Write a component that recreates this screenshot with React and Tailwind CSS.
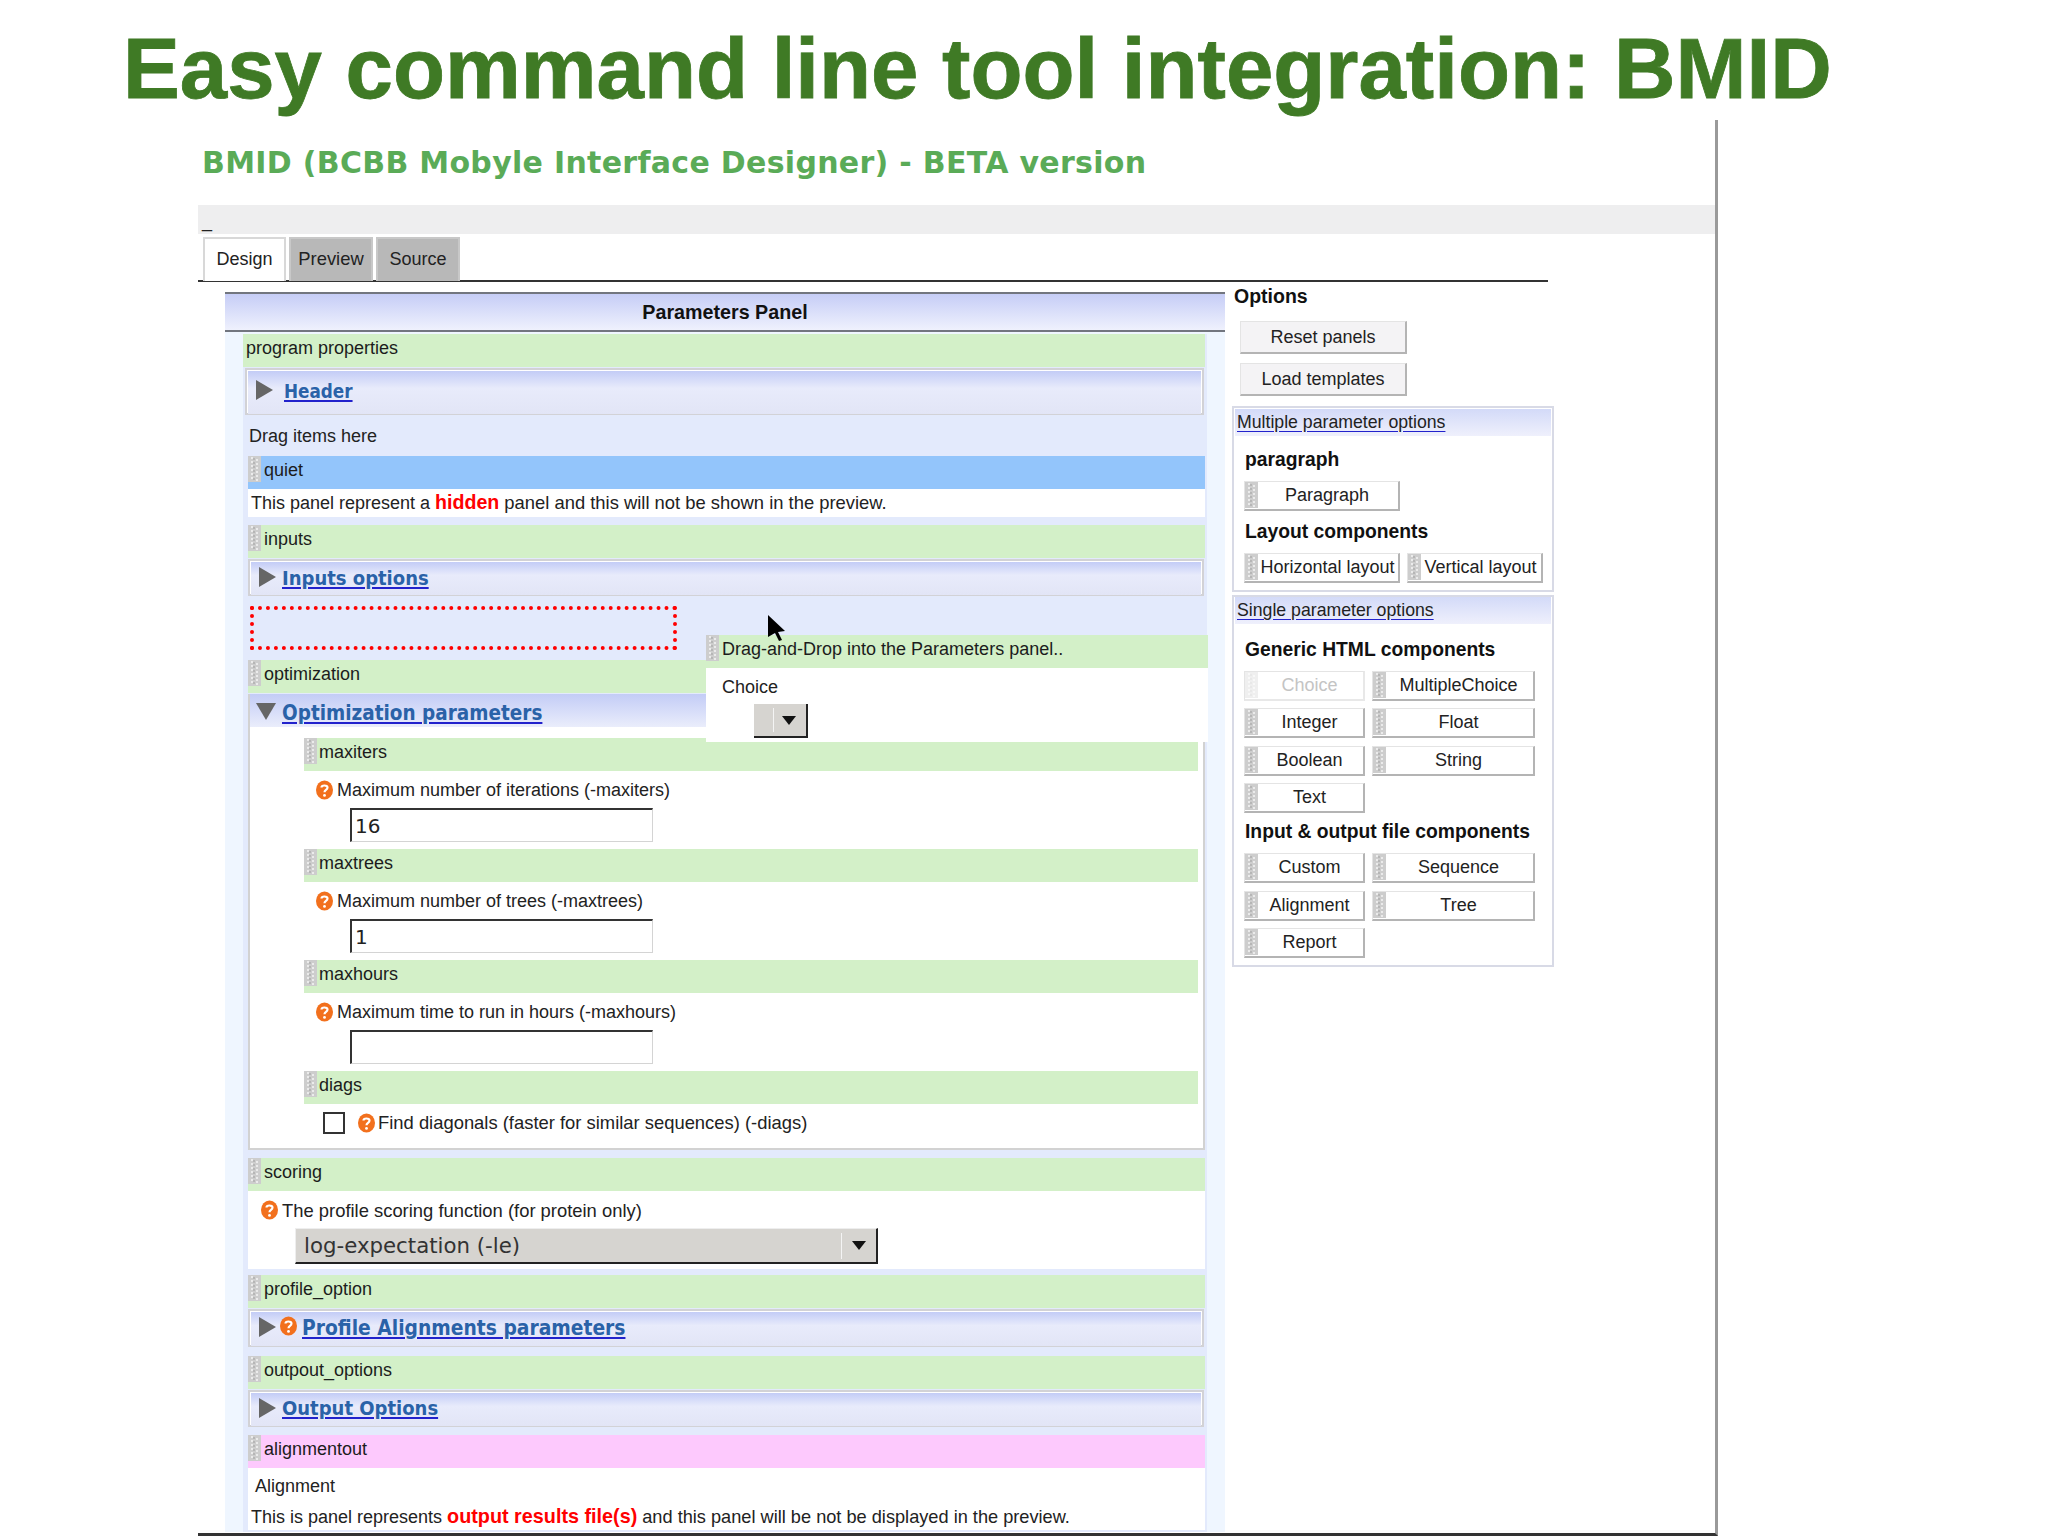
const btn = "flex bg-white h-[30px] border-t border-l border-t-[#e4e4e4] border-l-[#e4e4e4] border-r-2 border-b-2 border-r-[#b4b4b4] border-b-[#b4b4b4]";

function Grip({ faded }) {
  const dots = [2, 6, 10, 14, 18, 22];
  return (
    <svg width="13" height="26" className="shrink-0 block" opacity={faded ? 0.3 : 1}>
      <rect width="13" height="26" fill="#cdcdcd" />
      {dots.map((y) => (
        <g key={y}>
          <circle cx="4" cy={y} r="1" fill="#f4f4f4" />
          <circle cx="9" cy={y + 2} r="1" fill="#f4f4f4" />
          <circle cx="6" cy={y + 1} r="0.7" fill="#8f8f8f" />
        </g>
      ))}
    </svg>
  );
}

function Help() {
  return (
    <svg width="17" height="20" viewBox="0 0 17 20" className="shrink-0 block">
      <ellipse cx="8.5" cy="10" rx="8.5" ry="9.5" fill="#f2701d" />
      <path d="M5.5 7.5C5.5 5 11.5 4.6 11.5 7.6C11.5 10 8.5 9.8 8.5 12.2" fill="none" stroke="#fff" strokeWidth="2.2" />
      <circle cx="8.5" cy="15.4" r="1.4" fill="#fff" />
    </svg>
  );
}

function Arrow({ down }) {
  if (down) {
    return (
      <svg width="20" height="17" className="shrink-0 block">
        <polygon points="0,0 20,0 10,17" fill="#666" />
      </svg>
    );
  }
  return (
    <svg width="17" height="20" className="shrink-0 block">
      <polygon points="0,0 17,10 0,20" fill="#666" />
    </svg>
  );
}

function Bar({ label, color = "bg-[#d3f0c8]", className = "", gap = "gap-[3px]" }) {
  return (
    <div className={`flex h-[33px] ${gap} text-[18px] leading-[20px] text-[#1c1c1c] ${color} ${className}`}>
      <Grip />
      <span className="pt-[4px]">{label}</span>
    </div>
  );
}

function Title({ children, size = "text-[20.5px]" }) {
  return (
    <a className={`font-['DejaVu_Sans_Condensed','DejaVu_Sans',sans-serif] font-bold ${size} leading-[26px] text-[#2a62a8] underline decoration-[#2222cc] decoration-2 underline-offset-[2px] whitespace-nowrap`}>
      {children}
    </a>
  );
}

function Fold({ title, help, h, gap, top, arrow, size }) {
  return (
    <div className={`${h} border-2 border-[#d2d2d6] bg-white mr-[1px]`}>
      <div className={`h-full m-[1px] -mb-[1px] bg-gradient-to-b from-[#c3ccf6] via-[#e8ebfb] via-40% to-[#e2e5f6] flex items-start pl-[8px] ${top} ${gap}`}>
        <div className={arrow}>
          <Arrow />
        </div>
        {help && (
          <div className="pt-[1px] -ml-[7px] -mr-[6px]">
            <Help />
          </div>
        )}
        <Title size={size}>{title}</Title>
      </div>
    </div>
  );
}

function Field({ label, pad = "pl-[12px]", size = "text-[18px]" }) {
  return (
    <div className={`flex items-center gap-[4px] h-[37px] ${pad} ${size} text-[#222]`}>
      <Help />
      <span className="pt-[2px]">{label}</span>
    </div>
  );
}

function TextInput({ value }) {
  return (
    <div className="ml-[46px] w-[303px] h-[34px] bg-white border-t-2 border-l-2 border-t-[#333] border-l-[#333] border-r border-b border-r-[#d4d4d4] border-b-[#d4d4d4] pl-[3px] font-['DejaVu_Sans',sans-serif] text-[20px] leading-[33px] text-[#222]">
      {value}
    </div>
  );
}

function Caret() {
  return (
    <svg width="14" height="9" className="block">
      <polygon points="0,0 14,0 7,9" fill="#111" />
    </svg>
  );
}

function Tool({ label, w = "w-[156px]", faded, tight }) {
  return (
    <div className={`${btn} ${w} ${faded ? "border-r-[#e8e8e8] border-b-[#e8e8e8]" : ""}`}>
      <Grip faded={faded} />
      <span className={`flex-1 text-center text-[18px] leading-[27px] whitespace-nowrap ${tight ? "-ml-[1px]" : "pr-[2px]"} ${faded ? "text-[#c4c4c4]" : "text-[#222]"}`}>
        {label}
      </span>
    </div>
  );
}

function SideHead({ label }) {
  return (
    <div className="h-[27px] mx-[1px] bg-gradient-to-b from-[#d3daf8] to-[#eff0fc] pl-[2px] text-[17.7px] leading-[27px] text-[#222]">
      <span className="underline decoration-[#2222cc] underline-offset-[3px]">{label}</span>
    </div>
  );
}

function Heading({ children, className = "" }) {
  return <div className={`pl-[11px] font-bold text-[19.3px] leading-[22px] text-[#111] ${className}`}>{children}</div>;
}

function ToolRow({ children, className = "mt-[7px]" }) {
  return <div className={`flex gap-[7px] pl-[10px] ${className}`}>{children}</div>;
}

export default function App() {
  return (
    <div className="relative w-[2048px] h-[1536px] overflow-hidden bg-white font-['Liberation_Sans',Arial,sans-serif]">
      <h1 className="h-[120px] pl-[123px] pt-[21px] font-bold text-[85.2px] leading-[96px] text-[#3f7a25] [-webkit-text-stroke:0.8px_#3f7a25] whitespace-nowrap">
        Easy command line tool integration: BMID
      </h1>

      <div className="relative ml-[198px] w-[1520px] h-[1416px] border-r-[3px] border-r-[#9a9a9a] border-b-[3px] border-b-[#333]">
        {/* page heading */}
        <div className="h-[85px] pl-[4px] pt-[25px] font-['DejaVu_Sans',sans-serif] font-bold text-[30px] tracking-[0.3px] leading-[36px] text-[#5aab57] whitespace-nowrap">
          BMID (BCBB Mobyle Interface Designer) - BETA version
        </div>
        <div className="h-[29px] bg-[#eeeeef] pl-[4px] pt-[6px] text-[18px] leading-[20px] text-[#222]">_</div>

        {/* tabs */}
        <div className="flex gap-[3px] w-[1350px] h-[48px] pt-[3px] pl-[5px] border-b-2 border-[#333] text-[18px] text-[#222]">
          <div className="w-[83px] h-[44px] pb-[2px] flex items-center justify-center bg-white border-2 border-b-0 border-[#d8d8d8]">Design</div>
          <div className="w-[84px] h-[44px] pb-[2px] flex items-center justify-center bg-[#b8b8b8] border-2 border-b-0 border-[#c8c8c8] text-[18.4px]">Preview</div>
          <div className="w-[84px] h-[44px] pb-[2px] flex items-center justify-center bg-[#b8b8b8] border-2 border-b-0 border-[#c8c8c8]">Source</div>
        </div>

        <div className="flex">
          {/* parameters panel */}
          <div className="ml-[27px] mt-[10px] w-[1000px] h-[1240px] bg-[#eff6ff]">
            <div className="h-[40px] border-y-2 border-[#72767f] bg-gradient-to-b from-[#c6cdf6] to-[#eff1fd] text-center font-bold text-[19.7px] leading-[36px] text-[#111]">
              Parameters Panel
            </div>
            <div className="ml-[18px] w-[964px] mt-[2px] bg-[#e3eafc] h-[1198px]">
              <div className="h-[33px] w-[962px] bg-[#d3f0c8] pl-[3px] pt-[4px] text-[18px] leading-[20px] text-[#1c1c1c]">program properties</div>
              <div className="mt-[1px] ml-[2px] w-[960px]">
                <Fold title="Header" h="h-[47px]" gap="gap-[11px]" top="pt-[8px]" arrow="pt-[1px]" size="text-[18.7px]" />
              </div>
              <div className="h-[41px] pl-[6px] pt-[11px] text-[18px] leading-[20px] text-[#222]">Drag items here</div>

              <div className="pl-[5px] w-[962px]">
                <Bar label="quiet" color="bg-[#93c5fb]" />
                <div className="h-[28px] bg-white pl-[3px] text-[18px] leading-[27px] text-[#222]">
                  This panel represent a <b className="text-[#f00] text-[19.6px]">hidden</b> <span className="text-[18.4px]">panel and this will not be shown in the preview.</span>
                </div>

                <Bar label="inputs" className="mt-[8px]" />
                <div className="mt-[1px]">
                  <Fold title="Inputs options" h="h-[37px]" gap="gap-[6px]" top="pt-[3px]" arrow="pt-[2px]" size="text-[20px]" />
                </div>

                <div className="mt-[10px] ml-[2px] w-[427px] h-[44px] border-4 border-dotted border-[#f00]" />

                <Bar label="optimization" className="mt-[10px]" />
                <div className="mt-[1px] h-[456px] bg-white border-2 border-t-0 border-[#d2d2d2]">
                  <div className="h-[33px] bg-gradient-to-b from-[#c3ccf6] to-[#eaedfb] flex items-start pl-[6px] pt-[6px] gap-[6px]">
                    <div className="pt-[3px]">
                      <Arrow down />
                    </div>
                    <Title>Optimization parameters</Title>
                  </div>
                  <div className="pl-[54px] pr-[5px] pt-[11px]">
                    <Bar label="maxiters" gap="gap-[2px]" />
                    <Field label="Maximum number of iterations (-maxiters)" />
                    <TextInput value="16" />
                    <Bar label="maxtrees" gap="gap-[2px]" className="mt-[7px]" />
                    <Field label="Maximum number of trees (-maxtrees)" />
                    <TextInput value="1" />
                    <Bar label="maxhours" gap="gap-[2px]" className="mt-[7px]" />
                    <Field label="Maximum time to run in hours (-maxhours)" />
                    <TextInput value="" />
                    <Bar label="diags" gap="gap-[2px]" className="mt-[7px]" />
                    <div className="flex items-center h-[37px] pl-[19px] text-[18.4px] text-[#222]">
                      <div className="w-[22px] h-[22px] border-2 border-[#333] bg-white mr-[13px]" />
                      <Help />
                      <span className="ml-[3px]">Find diagonals (faster for similar sequences) (-diags)</span>
                    </div>
                  </div>
                </div>

                <Bar label="scoring" className="mt-[8px]" />
                <div className="h-[78px] bg-white">
                  <Field label="The profile scoring function (for protein only)" pad="pl-[13px]" size="text-[18.4px]" />
                  <div className="ml-[47px] w-[583px] h-[36px] flex items-center bg-[#d6d4d0] border-r-2 border-b-2 border-[#222] border-t border-l border-t-[#eee] border-l-[#eee] pl-[8px] font-['DejaVu_Sans',sans-serif] text-[21.3px] text-[#333]">
                    <span className="flex-1">log-expectation (-le)</span>
                    <span className="w-[1px] h-[26px] bg-[#f4f4f4] mr-[10px]" />
                    <span className="pr-[10px]">
                      <Caret />
                    </span>
                  </div>
                </div>

                <Bar label="profile_option" className="mt-[6px]" />
                <div className="mt-[1px]">
                  <Fold title="Profile Alignments parameters" help h="h-[38px]" gap="gap-[11px]" top="pt-[3px]" arrow="pt-[2px]" size="text-[20.8px]" />
                </div>

                <Bar label="outpout_options" className="mt-[9px]" />
                <div className="mt-[1px]">
                  <Fold title="Output Options" h="h-[37px]" gap="gap-[6px]" top="pt-[2px]" arrow="pt-[3px]" size="text-[20px]" />
                </div>

                <Bar label="alignmentout" color="bg-[#fdc9fd]" className="mt-[8px]" />
                <div className="h-[62px] bg-white pl-[3px] text-[18px] leading-[20px] text-[#222]">
                  <div className="pt-[8px] pl-[4px]">Alignment</div>
                  <div className="mt-[10px]">
                    This is panel represents <b className="text-[#f00] text-[19.8px]">output results file(s)</b> <span className="text-[18.2px]">and this panel will be not be displayed in the preview.</span>
                  </div>
                </div>
              </div>
            </div>
          </div>

          {/* options */}
          <div className="ml-[7px] w-[322px]">
            <div className="pl-[2px] pt-[2px] font-bold text-[19.5px] leading-[24px] text-[#111]">Options</div>
            <div className="mt-[13px] ml-[8px] flex flex-col gap-[9px]">
              <div className="w-[167px] h-[33px] bg-[#f4f3f5] border-t border-l border-[#e4e4e4] border-r-2 border-b-2 border-r-[#b4b4b4] border-b-[#b4b4b4] text-center text-[18px] leading-[30px] text-[#222]">Reset panels</div>
              <div className="w-[167px] h-[33px] bg-[#f4f3f5] border-t border-l border-[#e4e4e4] border-r-2 border-b-2 border-r-[#b4b4b4] border-b-[#b4b4b4] text-center text-[18px] leading-[30px] text-[#222]">Load templates</div>
            </div>

            <div className="mt-[10px] h-[186px] border-2 border-[#d8dae6] pt-[1px]">
              <SideHead label="Multiple parameter options" />
              <Heading className="mt-[13px]">paragraph</Heading>
              <ToolRow className="mt-[10px]">
                <Tool label="Paragraph" />
              </ToolRow>
              <Heading className="mt-[10px]">Layout components</Heading>
              <ToolRow className="mt-[10px]">
                <Tool label="Horizontal layout" tight />
                <Tool label="Vertical layout" w="w-[136px]" tight />
              </ToolRow>
            </div>

            <div className="mt-[3px] h-[372px] border-2 border-[#d8dae6]">
              <SideHead label="Single parameter options" />
              <Heading className="mt-[15px]">Generic HTML components</Heading>
              <ToolRow className="mt-[10px]">
                <Tool label="Choice" w="w-[121px]" faded />
                <Tool label="MultipleChoice" w="w-[163px]" />
              </ToolRow>
              <ToolRow>
                <Tool label="Integer" w="w-[121px]" />
                <Tool label="Float" w="w-[163px]" />
              </ToolRow>
              <ToolRow className="mt-[8px]">
                <Tool label="Boolean" w="w-[121px]" />
                <Tool label="String" w="w-[163px]" />
              </ToolRow>
              <ToolRow>
                <Tool label="Text" w="w-[121px]" />
              </ToolRow>
              <Heading className="mt-[8px]">Input &amp; output file components</Heading>
              <ToolRow className="mt-[10px]">
                <Tool label="Custom" w="w-[121px]" />
                <Tool label="Sequence" w="w-[163px]" />
              </ToolRow>
              <ToolRow className="mt-[8px]">
                <Tool label="Alignment" w="w-[121px]" />
                <Tool label="Tree" w="w-[163px]" />
              </ToolRow>
              <ToolRow>
                <Tool label="Report" w="w-[121px]" />
              </ToolRow>
            </div>
          </div>
        </div>

        {/* item being dragged */}
        <div className="absolute left-[508px] top-[515px] w-[502px] h-[107px] bg-white">
          <Bar label="Drag-and-Drop into the Parameters panel.." />
          <div className="pl-[16px] pt-[8px] text-[18px] leading-[22px] text-[#222]">Choice</div>
          <div className="ml-[48px] mt-[6px] w-[54px] h-[34px] flex items-center justify-end bg-[#d6d4d0] border-r-2 border-b-2 border-[#222] pr-[10px]">
            <span className="w-[1px] h-[24px] bg-[#f4f4f4] mr-[8px]" />
            <Caret />
          </div>
        </div>
        <svg width="18" height="26" className="absolute left-[570px] top-[495px]">
          <polygon points="0,0 17,16 10,17 14,25 11,26 7,18 0,22" fill="#000" />
        </svg>
      </div>
    </div>
  );
}
